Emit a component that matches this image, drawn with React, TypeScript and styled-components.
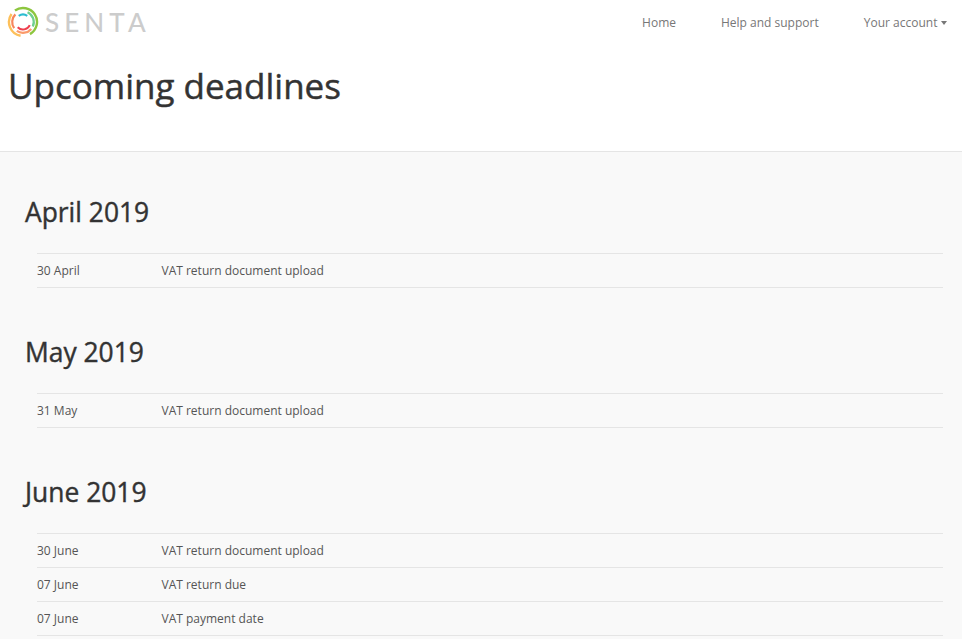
import styled, { createGlobalStyle } from "styled-components";

const sections = [
  {
    title: "April 2019",
    rows: [["30 April", "VAT return document upload"]],
  },
  {
    title: "May 2019",
    rows: [["31 May", "VAT return document upload"]],
  },
  {
    title: "June 2019",
    rows: [
      ["30 June", "VAT return document upload"],
      ["07 June", "VAT return due"],
      ["07 June", "VAT payment date"],
    ],
  },
];

// clockwise arc around the logo centre, degrees measured from 12 o'clock
const arc = (r: number, from: number, to: number) => {
  const point = (deg: number) => {
    const rad = (deg * Math.PI) / 180;
    return `${(16 + r * Math.sin(rad)).toFixed(2)} ${(16 - r * Math.cos(rad)).toFixed(2)}`;
  };
  const large = to - from > 180 ? 1 : 0;
  return `M${point(from)}A${r} ${r} 0 ${large} 1 ${point(to)}`;
};

const Logo = () => (
  <LogoWrap>
    <svg width="32" height="32" viewBox="0 0 32 32" fill="none" strokeWidth="2.4">
      <path d={arc(14, -35, 150)} stroke="#8dc63f" />
      <path d={arc(14, 190, 305)} stroke="#fdc05a" />
      <path d={arc(10.8, 25, 115)} stroke="#6fcf8e" strokeWidth="2.2" />
      <path d={arc(10.8, 130, 215)} stroke="#fb9a6a" strokeWidth="2.2" />
      <path d={arc(10.8, 235, 315)} stroke="#f7865c" strokeWidth="2.2" />
      <path d={arc(7.5, -35, 35)} stroke="#2bbcd0" strokeWidth="2" />
      <path d={arc(7.5, 115, 225)} stroke="#ee3f4e" strokeWidth="2" />
    </svg>
    <LogoText>SENTA</LogoText>
  </LogoWrap>
);

const App = () => {
  return (
    <>
      <GlobalStyle />
      <Navbar>
        <Logo />
        <NavLinks>
          <NavLink>Home</NavLink>
          <NavLink>Help and support</NavLink>
          <NavLink>
            Your account
            <Caret />
          </NavLink>
        </NavLinks>
      </Navbar>
      <PageHeader>
        <PageTitle>Upcoming deadlines</PageTitle>
      </PageHeader>
      <Content>
        {sections.map((section) => (
          <Section key={section.title}>
            <SectionTitle>{section.title}</SectionTitle>
            <Table>
              {section.rows.map(([date, label], i) => (
                <Row key={i}>
                  <DateCell>{date}</DateCell>
                  <RowLabel>{label}</RowLabel>
                </Row>
              ))}
            </Table>
          </Section>
        ))}
      </Content>
    </>
  );
};

const GlobalStyle = createGlobalStyle`
  html, body {
    margin: 0;
    height: 100%;
    overflow: hidden;
    background: #fff;
    font-family: "Open Sans", "Liberation Sans", sans-serif;
  }
`;

const Navbar = styled.div`
  height: 44px;
  display: flex;
  justify-content: space-between;
  align-items: center;
  padding: 0 15px 0 7px;
`;

const LogoWrap = styled.div`
  display: flex;
  align-items: center;
  gap: 6px;
`;

const LogoText = styled.span`
  font-family: "Lato", sans-serif;
  font-size: 26px;
  font-weight: 500;
  letter-spacing: 5.1px;
  color: #cccccc;
`;

const NavLinks = styled.div`
  display: flex;
  gap: 45px;
`;

const NavLink = styled.a`
  font-size: 12px;
  line-height: 17px;
  color: #777;
`;

const Caret = styled.span`
  display: inline-block;
  margin-left: 3.6px;
  vertical-align: 2px;
  border-top: 4px solid #777;
  border-left: 3.75px solid transparent;
  border-right: 3.75px solid transparent;
`;

const PageHeader = styled.div`
  height: 107px;
  padding-left: 8px;
  background: #fff;
  border-bottom: 1px solid #e5e5e5;
`;

const PageTitle = styled.h1`
  margin: 0;
  padding-top: 17px;
  font-size: 35px;
  line-height: 50px;
  font-weight: 400;
  -webkit-text-stroke: 0.45px #333;
  color: #333;
`;

const Content = styled.div`
  box-sizing: border-box;
  background: #f9f9f9;
  height: 487px;
  overflow: hidden;
  padding: 40px 19px 0 25px;
`;

const Section = styled.section`
  min-height: 140px;
`;

const SectionTitle = styled.h2`
  margin: 0;
  font-size: 26.4px;
  line-height: 40px;
  font-weight: 400;
  -webkit-text-stroke: 0.4px #333;
  color: #333;
`;

const Table = styled.div`
  margin: 21px 0 0 12px;
  border-top: 1px solid #e5e5e5;
`;

const Row = styled.div`
  display: flex;
  height: 33px;
  align-items: center;
  font-size: 12px;
  color: #555;
  border-bottom: 1px solid #e5e5e5;
`;

const DateCell = styled.span`
  width: 125px;
`;

const RowLabel = styled.span`
  margin-left: -0.5px;
`;

export default App;
